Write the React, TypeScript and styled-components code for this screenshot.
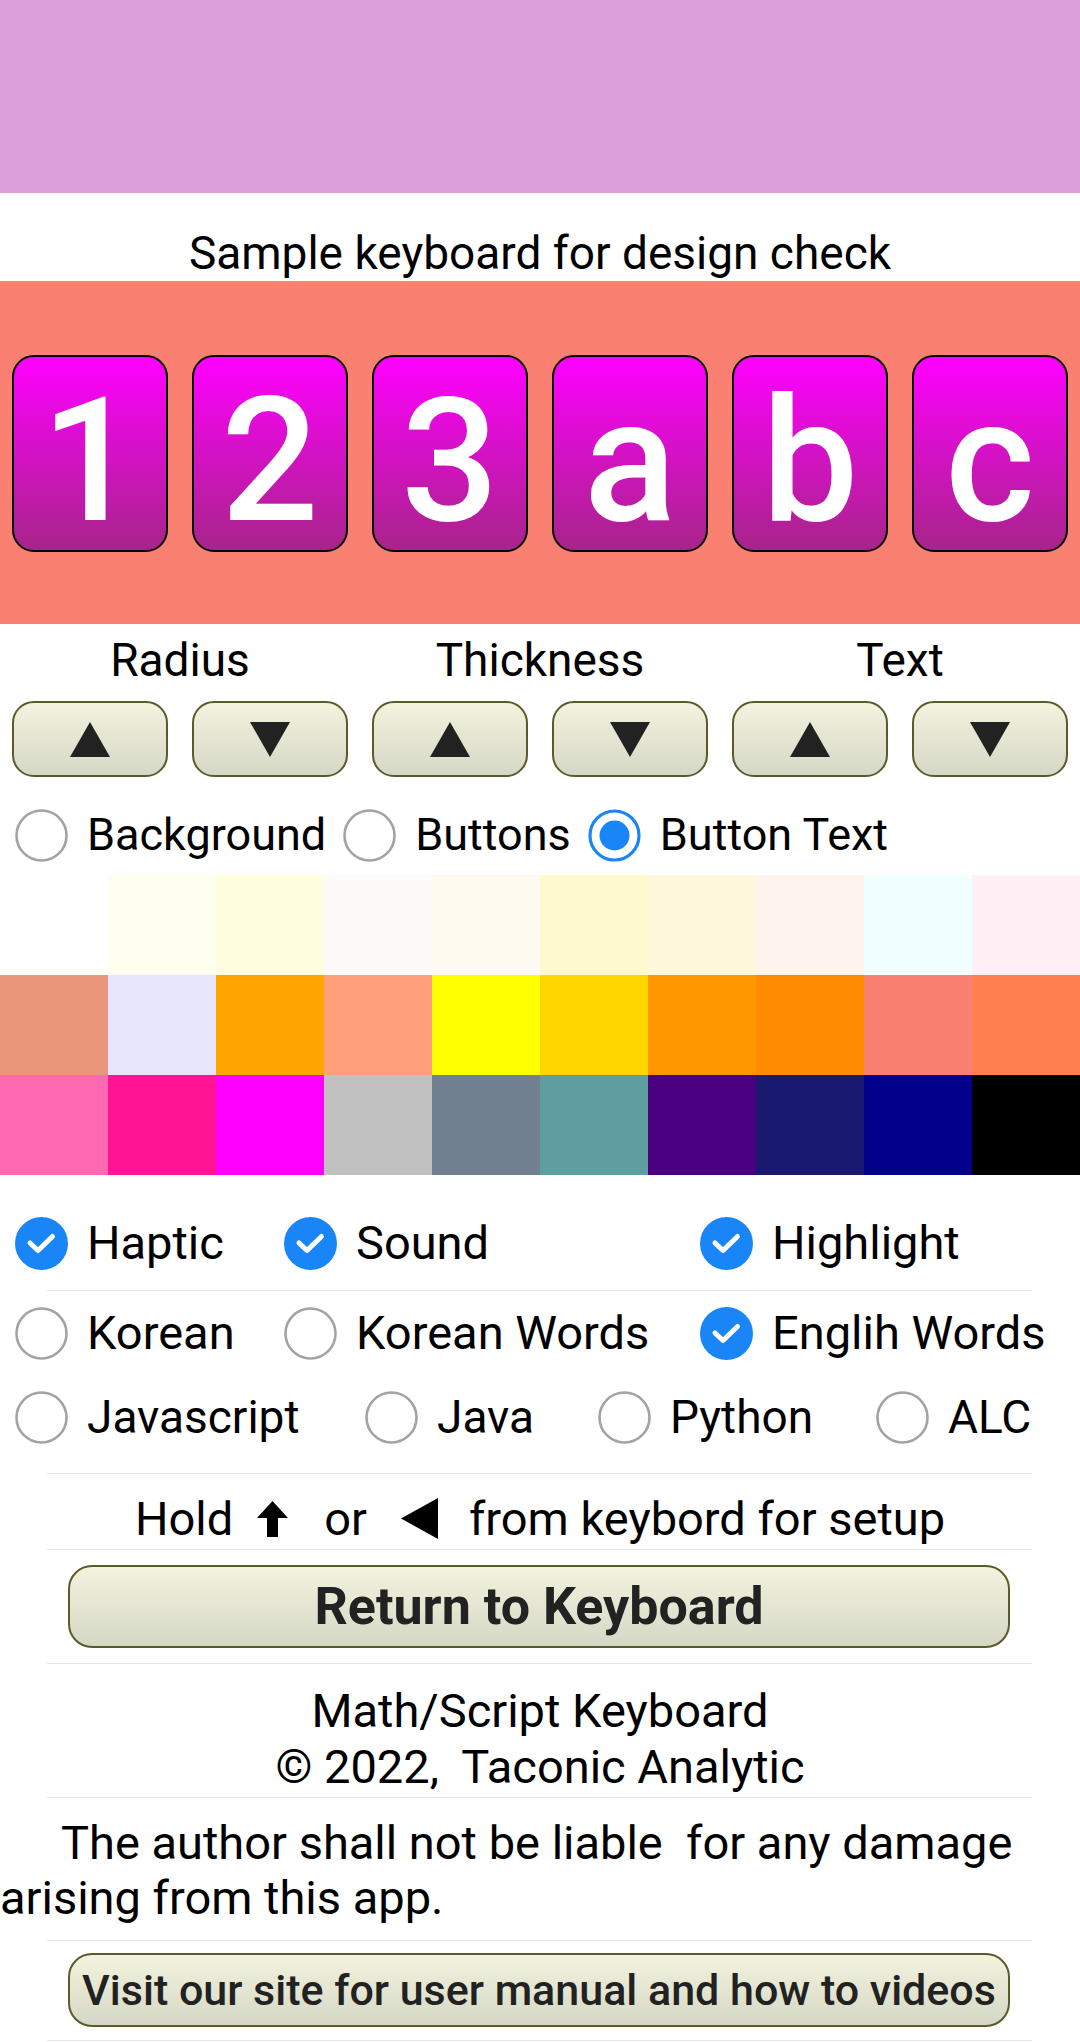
import styled, { createGlobalStyle } from 'styled-components';

const GlobalStyle = createGlobalStyle`
  html, body {
    margin: 0;
    padding: 0;
    background: #ffffff;
  }
  body {
    font-family: Roboto, 'Noto Sans', sans-serif;
    color: #000000;
  }
`;

const KEYS = ['1', '2', '3', 'a', 'b', 'c'];

const STEP_LABELS = ['Radius', 'Thickness', 'Text'];

const PALETTE = [
  '#ffffff', '#fffff0', '#ffffe0', '#fffafa', '#fffaf0',
  '#fffacd', '#fff8dc', '#fff5ee', '#f0ffff', '#fff0f5',
  '#e9967a', '#e6e6fa', '#ffa500', '#ffa07a', '#ffff00',
  '#ffd700', '#ff9800', '#ff8c00', '#fa8072', '#ff7f50',
  '#ff69b4', '#ff1493', '#ff00ff', '#c0c0c0', '#708090',
  '#5f9ea0', '#4b0082', '#191970', '#00008b', '#000000',
];

type MarkKind = 'off' | 'radio' | 'check';

function Mark({ kind }: { kind: MarkKind }) {
  if (kind === 'check') {
    return (
      <MarkSvg viewBox="0 0 53 53">
        <circle cx="26.5" cy="26.5" r="26.5" fill="#1a85f6" />
        <path d="M15 26 L23 33.5 L37.5 19.5" fill="none" stroke="#fff" strokeWidth="5" strokeLinecap="round" strokeLinejoin="round" />
      </MarkSvg>
    );
  }
  if (kind === 'radio') {
    return (
      <MarkSvg viewBox="0 0 53 53">
        <circle cx="26.5" cy="26.5" r="24.5" fill="none" stroke="#1a85f6" strokeWidth="3.2" />
        <circle cx="26.5" cy="26.5" r="15" fill="#1a85f6" />
      </MarkSvg>
    );
  }
  return (
    <MarkSvg viewBox="0 0 53 53">
      <circle cx="26.5" cy="26.5" r="25" fill="none" stroke="#a3a3a3" strokeWidth="2.6" />
    </MarkSvg>
  );
}

function Triangle({ up }: { up: boolean }) {
  return (
    <svg width="40" height="35" viewBox="0 0 40 35">
      <polygon points={up ? '20,0 40,35 0,35' : '0,0 40,0 20,35'} fill="#222222" />
    </svg>
  );
}

function Option({ kind, label, size }: { kind: MarkKind; label: string; size?: number }) {
  return (
    <Choice $size={size ?? 47}>
      <Mark kind={kind} />
      <span>{label}</span>
    </Choice>
  );
}

function App() {
  return (
    <Page>
      <GlobalStyle />
      <Banner />
      <Caption>Sample keyboard for design check</Caption>
      <KeyPanel>
        {KEYS.map((k) => (
          <Key key={k}>{k}</Key>
        ))}
      </KeyPanel>

      <LabelRow>
        {STEP_LABELS.map((l) => (
          <div key={l}>{l}</div>
        ))}
      </LabelRow>
      <StepRow>
        {STEP_LABELS.flatMap((l) => [
          <StepButton key={l + 'up'}>
            <Triangle up />
          </StepButton>,
          <StepButton key={l + 'down'}>
            <Triangle up={false} />
          </StepButton>,
        ])}
      </StepRow>

      <TargetRow>
        <Option kind="off" label="Background" size={45} />
        <Option kind="off" label="Buttons" size={45} />
        <Option kind="radio" label="Button Text" size={45} />
      </TargetRow>

      <Palette>
        {PALETTE.map((c, i) => (
          <Swatch key={i} $color={c} />
        ))}
      </Palette>

      <Options>
        <OptionRow $cols="269px 416px 1fr">
          <Option kind="check" label="Haptic" />
          <Option kind="check" label="Sound" />
          <Option kind="check" label="Highlight" />
        </OptionRow>
        <Divider $gap={5} />
        <OptionRow $cols="269px 416px 1fr">
          <Option kind="off" label="Korean" />
          <Option kind="off" label="Korean Words" />
          <Option kind="check" label="Englih Words" />
        </OptionRow>
        <OptionRow $cols="350px 233px 278px 1fr">
          <Option kind="off" label="Javascript" size={46} />
          <Option kind="off" label="Java" size={46} />
          <Option kind="off" label="Python" size={46} />
          <Option kind="off" label="ALC" size={46} />
        </OptionRow>
      </Options>

      <Divider $gap={14} />
      <HoldRow>
        <span>Hold</span>
        <HoldIcon $before={24} $after={36} width="31" height="36" viewBox="0 0 31 36">
          <polygon points="15.5,0 31,17 21,17 21,36 10,36 10,17 0,17" fill="#000" />
        </HoldIcon>
        <span>or</span>
        <HoldIcon $before={34} $after={31} width="37" height="41" viewBox="0 0 37 41">
          <polygon points="0,20.5 37,0 37,41" fill="#000" />
        </HoldIcon>
        <span>from keybord for setup</span>
      </HoldRow>
      <Divider />
      <WideButton $height={83} $size={52} $weight={700} $top={15} $bottom={15}>
        Return to Keyboard
      </WideButton>
      <Divider />
      <Credits>
        Math/Script Keyboard
        <br />© 2022,  Taconic Analytic
      </Credits>
      <Divider />
      <Disclaimer>The author shall not be liable  for any damage arising from this app.</Disclaimer>
      <Divider />
      <WideButton $height={74} $size={43} $weight={500} $top={12} $bottom={13}>
        Visit our site for user manual and how to videos
      </WideButton>
      <Divider />
    </Page>
  );
}

const Page = styled.div`
  width: 1080px;
  background: #ffffff;
`;

const Banner = styled.div`
  height: 193px;
  background: #dda0dd;
`;

const Caption = styled.div`
  padding: 34px 0 2px;
  font-size: 46px;
  line-height: 52px;
  text-align: center;
`;

const KeyPanel = styled.div`
  display: grid;
  grid-template-columns: repeat(6, 1fr);
  padding: 74px 0 72px;
  background: #fa8072;
`;

const Key = styled.div`
  box-sizing: border-box;
  height: 197px;
  margin: 0 12px;
  padding-top: 14px;
  display: flex;
  align-items: center;
  justify-content: center;
  border: 2.8px solid #000000;
  border-radius: 22px;
  background: linear-gradient(#ff00ff, #a8248a);
  color: #ffffff;
  font-size: 172px;
  font-weight: 500;
  line-height: 1;
`;

const LabelRow = styled.div`
  display: grid;
  grid-template-columns: repeat(3, 1fr);
  padding: 10px 0 15px;
  font-size: 46px;
  line-height: 52px;
  text-align: center;
`;

const StepRow = styled.div`
  display: grid;
  grid-template-columns: repeat(6, 1fr);
`;

const StepButton = styled.div`
  box-sizing: border-box;
  height: 76px;
  margin: 0 12px;
  display: flex;
  align-items: center;
  justify-content: center;
  border: 2.5px solid #5b5a2a;
  border-radius: 22px;
  background: linear-gradient(#f3f3de, #d5d8c6);
`;

const TargetRow = styled.div`
  display: flex;
  align-items: center;
  gap: 17px;
  height: 80px;
  margin-top: 18px;
  padding-left: 15px;
`;

const Choice = styled.div<{ $size: number }>`
  display: flex;
  align-items: center;
  gap: 19px;
  font-size: ${(p) => p.$size}px;
  line-height: 56px;
  white-space: nowrap;
`;

const MarkSvg = styled.svg`
  width: 53px;
  height: 53px;
  flex: none;
`;

const Palette = styled.div`
  display: grid;
  grid-template-columns: repeat(10, 1fr);
  grid-auto-rows: 100px;
`;

const Swatch = styled.div<{ $color: string }>`
  background: ${(p) => p.$color};
`;

const Options = styled.div`
  padding-top: 26px;
`;

const OptionRow = styled.div<{ $cols: string }>`
  display: grid;
  grid-template-columns: ${(p) => p.$cols};
  align-items: center;
  height: 84px;
  padding-left: 15px;
`;

const Divider = styled.div<{ $gap?: number }>`
  height: 1px;
  margin: ${(p) => p.$gap ?? 0}px 48px 0 47px;
  background: #e6e6e6;
`;

const HoldRow = styled.div`
  box-sizing: border-box;
  height: 75px;
  padding-top: 14px;
  display: flex;
  align-items: center;
  justify-content: center;
  font-size: 47px;
  line-height: 56px;
  white-space: pre;
`;

const HoldIcon = styled.svg<{ $before: number; $after: number }>`
  margin: 0 ${(p) => p.$after}px 0 ${(p) => p.$before}px;
  flex: none;
`;

const WideButton = styled.div<{ $height: number; $size: number; $weight: number; $top: number; $bottom: number }>`
  box-sizing: border-box;
  height: ${(p) => p.$height}px;
  margin: ${(p) => p.$top}px 70px ${(p) => p.$bottom}px 68px;
  display: flex;
  align-items: center;
  justify-content: center;
  border: 2.5px solid #5b5a2a;
  border-radius: 24px;
  background: linear-gradient(#f3f3de, #d5d8c6);
  color: #222222;
  font-size: ${(p) => p.$size}px;
  font-weight: ${(p) => p.$weight};
  white-space: nowrap;
`;

const Credits = styled.div`
  padding: 19px 0 2px;
  font-size: 47px;
  line-height: 56px;
  text-align: center;
  white-space: pre-wrap;
`;

const Disclaimer = styled.div`
  padding: 17px 0 15px;
  font-size: 47px;
  line-height: 55px;
  text-indent: 61px;
  white-space: pre-wrap;
`;

export default App;
